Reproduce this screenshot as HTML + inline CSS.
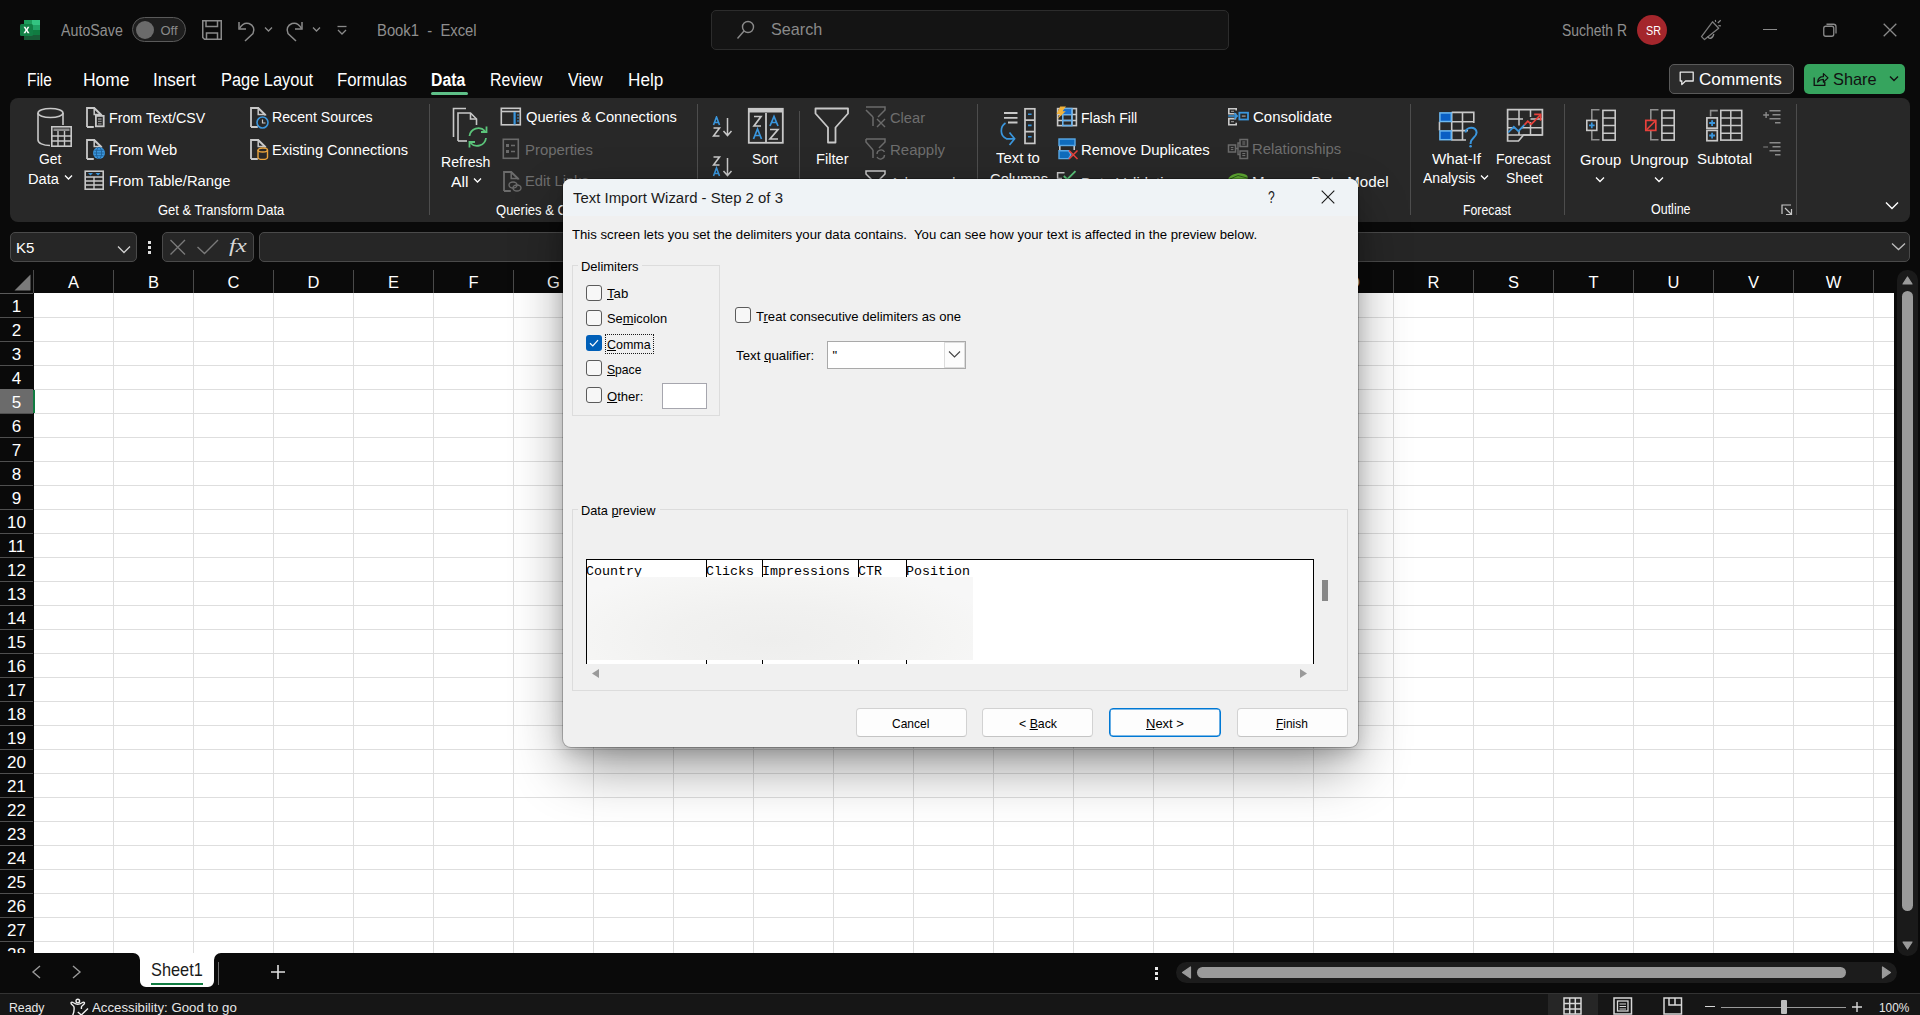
<!DOCTYPE html><html><head><meta charset="utf-8"><title>Excel</title><style>
*{margin:0;padding:0;box-sizing:border-box}
html,body{width:1920px;height:1015px;overflow:hidden;background:#0a0a0a;font-family:'Liberation Sans',sans-serif}
.t{position:absolute;white-space:pre;transform-origin:0 0}
.r{position:absolute}
u{text-decoration:underline;text-underline-offset:1px;text-decoration-thickness:1px}
</style></head><body><svg class="r" style="left:20px;top:20px;" width="20" height="20" viewBox="0 0 20 20" fill="none">
<rect x="4" y="0" width="16" height="20" rx="1.5" fill="#107c41"/>
<rect x="12" y="0" width="8" height="5" fill="#33c481"/>
<rect x="12" y="5" width="8" height="5" fill="#21a366"/>
<rect x="4" y="0" width="8" height="5" fill="#1d9e5c"/>
<rect x="12" y="10" width="8" height="5" fill="#107c41"/>
<rect x="4" y="15" width="16" height="5" fill="#185c37"/>
<rect x="0" y="4" width="13" height="12" rx="1.5" fill="#128046"/>
<path d="M3.6 6.8 L5.4 6.8 L6.5 8.9 L7.6 6.8 L9.4 6.8 L7.5 10 L9.5 13.2 L7.6 13.2 L6.5 11.1 L5.4 13.2 L3.5 13.2 L5.5 10 Z" fill="#fff"/>
</svg>
<div class="t" id="t02523e67" style="left:60.99px;top:23.00px;font-size:16px;line-height:16px;color:#8f8f8f;font-family:'Liberation Sans', sans-serif;transform:scaleX(0.8908);">AutoSave</div>
<div class="r" style="left:132px;top:17px;width:54px;height:25px;border:1.5px solid #5a5a5a;border-radius:13px;background:#1e1e1e;"></div>
<div class="r" style="left:136px;top:20.5px;width:18px;height:18px;border-radius:50%;background:#6b6b6b;"></div>
<div class="t" id="teb0dc6d4" style="left:160.40px;top:24.00px;font-size:13px;line-height:13px;color:#8a8a8a;font-family:'Liberation Sans', sans-serif;">Off</div>
<svg class="r" style="left:202px;top:20px;" width="20" height="20" viewBox="0 0 20 20" fill="none"><path d="M0.75 0.75 H19.25 V19.25 H2.5 L0.75 17.5 Z" stroke="#8a8a8a" stroke-width="1.5"/>
<path d="M4 1 V6.5 H15.5 V1" stroke="#8a8a8a" stroke-width="1.5"/><path d="M4.5 19 V13 H15.5 V19" stroke="#8a8a8a" stroke-width="1.5"/></svg>
<svg class="r" style="left:236px;top:18px;" width="24" height="24" viewBox="0 0 24 24" fill="none"><path d="M3 4 V11 H10" stroke="#8a8a8a" stroke-width="1.5"/><path d="M3.5 10.5 C6 6 9.5 4.5 13 5.5 C17.5 7 19 11.5 17 15.5 L9 23" stroke="#8a8a8a" stroke-width="1.5"/></svg>
<svg class="r" style="left:264px;top:26px;" width="10" height="8" viewBox="0 0 10 8" fill="none"><path d="M1 1.5 L4.5 5 L8 1.5" stroke="#8a8a8a" stroke-width="1.3"/></svg>
<svg class="r" style="left:281px;top:18px;" width="24" height="24" viewBox="0 0 24 24" fill="none"><path d="M21 4 V11 H14" stroke="#8a8a8a" stroke-width="1.5"/><path d="M20.5 10.5 C18 6 14.5 4.5 11 5.5 C6.5 7 5 11.5 7 15.5 L15 23" stroke="#8a8a8a" stroke-width="1.5"/></svg>
<svg class="r" style="left:312px;top:26px;" width="10" height="8" viewBox="0 0 10 8" fill="none"><path d="M1 1.5 L4.5 5 L8 1.5" stroke="#8a8a8a" stroke-width="1.3"/></svg>
<svg class="r" style="left:336px;top:25px;" width="12" height="12" viewBox="0 0 12 12" fill="none"><path d="M1.5 1.5 H10.5" stroke="#8a8a8a" stroke-width="1.3"/><path d="M2 5 L6 9 L10 5" stroke="#8a8a8a" stroke-width="1.3"/></svg>
<div class="t" id="t79c68d6a" style="left:377.07px;top:23.00px;font-size:16px;line-height:16px;color:#8f8f8f;font-family:'Liberation Sans', sans-serif;transform:scaleX(0.9257);">Book1  -  Excel</div>
<div class="r" style="left:711px;top:10px;width:518px;height:40px;border:1px solid #2c2c2c;border-radius:5px;background:#141414;"></div>
<svg class="r" style="left:736px;top:20px;" width="20" height="20" viewBox="0 0 20 20" fill="none"><circle cx="12" cy="7" r="5.5" stroke="#8a8a8a" stroke-width="1.4"/><path d="M8 11 L1.5 18.5" stroke="#8a8a8a" stroke-width="1.4"/></svg>
<div class="t" id="t867af4f4" style="left:771.02px;top:21.00px;font-size:17px;line-height:17px;color:#8a8a8a;font-family:'Liberation Sans', sans-serif;transform:scaleX(0.9518);">Search</div>
<div class="t" id="t7aee8798" style="left:1561.67px;top:23.00px;font-size:16px;line-height:16px;color:#8f8f8f;font-family:'Liberation Sans', sans-serif;transform:scaleX(0.8693);">Sucheth R</div>
<div class="r" style="left:1637px;top:15px;width:30px;height:30px;border-radius:50%;background:#a4262c;"></div>
<div class="t" id="t512c0f5e" style="left:1645.80px;top:24.00px;font-size:13px;line-height:13px;color:#fff;font-family:'Liberation Sans', sans-serif;transform:scaleX(0.8298);">SR</div>
<svg class="r" style="left:1700px;top:19px;" width="23" height="23" viewBox="0 0 23 23" fill="none"><path d="M1.5 17.6 L12.5 2.8 L18.7 9.3 L4.5 20.6 Z" stroke="#7c7c7c" stroke-width="1.3" stroke-linejoin="round"/>
<path d="M7.7 17.4 C8.5 20 12.5 20.5 13.9 15" stroke="#8a8a8a" stroke-width="1.3"/>
<path d="M15.3 1 L15.7 2.8 M17.8 4 L20.7 1.2 M18.4 6.6 L20.9 6.8" stroke="#8a8a8a" stroke-width="1.2"/></svg>
<div class="r" style="left:1763px;top:28.5px;width:14px;height:1.3px;background:#8a8a8a;"></div>
<svg class="r" style="left:1822px;top:22px;" width="16" height="16" viewBox="0 0 16 16" fill="none"><rect x="1.75" y="4.25" width="10" height="10" rx="2" stroke="#8a8a8a" stroke-width="1.3"/><path d="M4.5 2.25 H11.5 A2.5 2.5 0 0 1 14 4.75 V11.5" stroke="#8a8a8a" stroke-width="1.3"/></svg>
<svg class="r" style="left:1883px;top:23px;" width="14" height="14" viewBox="0 0 14 14" fill="none"><path d="M0.7 0.7 L13.3 13.3 M13.3 0.7 L0.7 13.3" stroke="#8a8a8a" stroke-width="1.3"/></svg>
<div class="t" id="tea40fbc1" style="left:26.69px;top:71.00px;font-size:18px;line-height:18px;color:#ffffff;font-family:'Liberation Sans', sans-serif;transform:scaleX(0.8571);">File</div>
<div class="t" id="t49ac8ac8" style="left:83.44px;top:71.00px;font-size:18px;line-height:18px;color:#ffffff;font-family:'Liberation Sans', sans-serif;transform:scaleX(0.9694);">Home</div>
<div class="t" id="t768858fc" style="left:153.05px;top:71.00px;font-size:18px;line-height:18px;color:#ffffff;font-family:'Liberation Sans', sans-serif;transform:scaleX(0.9515);">Insert</div>
<div class="t" id="t654c00e4" style="left:220.65px;top:71.00px;font-size:18px;line-height:18px;color:#ffffff;font-family:'Liberation Sans', sans-serif;transform:scaleX(0.9109);">Page Layout</div>
<div class="t" id="t02751798" style="left:336.85px;top:71.00px;font-size:18px;line-height:18px;color:#ffffff;font-family:'Liberation Sans', sans-serif;transform:scaleX(0.9324);">Formulas</div>
<div class="t" id="te84661d4" style="left:431.45px;top:71.00px;font-size:18px;line-height:18px;color:#ffffff;font-family:'Liberation Sans', sans-serif;font-weight:700;transform:scaleX(0.8761);">Data</div>
<div class="t" id="t1ac13ade" style="left:490.44px;top:71.00px;font-size:18px;line-height:18px;color:#ffffff;font-family:'Liberation Sans', sans-serif;transform:scaleX(0.8857);">Review</div>
<div class="t" id="t1e8d9fc8" style="left:568.48px;top:71.00px;font-size:18px;line-height:18px;color:#ffffff;font-family:'Liberation Sans', sans-serif;transform:scaleX(0.8969);">View</div>
<div class="t" id="tf6ac0ac4" style="left:627.60px;top:71.00px;font-size:18px;line-height:18px;color:#ffffff;font-family:'Liberation Sans', sans-serif;transform:scaleX(0.9521);">Help</div>
<div class="r" style="left:431px;top:92px;width:37px;height:3px;background:#5ec088;border-radius:2px;"></div>
<div class="r" style="left:1669px;top:64px;width:125px;height:30px;border:1px solid #5a5a5a;border-radius:5px;background:#2b2b2b;"></div>
<svg class="r" style="left:1679px;top:71px;" width="16" height="16" viewBox="0 0 16 16" fill="none"><path d="M1.2 1.2 H14.2 V10 H6.5 L2.8 13.6 V10 H1.2 Z" stroke="#e8e8e8" stroke-width="1.3" stroke-linejoin="round"/></svg>
<div class="t" id="tdf8b1b22" style="left:1698.96px;top:71.00px;font-size:17px;line-height:17px;color:#fff;font-family:'Liberation Sans', sans-serif;transform:scaleX(1.0068);">Comments</div>
<div class="r" style="left:1804px;top:64px;width:101px;height:30px;border-radius:5px;background:#36a45e;"></div>
<svg class="r" style="left:1813px;top:71px;" width="17" height="16" viewBox="0 0 17 16" fill="none"><path d="M1.2 6.5 V14.3 H11.8 V11" stroke="#111" stroke-width="1.3"/><path d="M4.6 11 C5 7.5 7.5 5.6 10.4 5.6 V2.6 L15 6.9 L10.4 11.2 V8.4 C8 8.4 6.2 9.2 4.6 11 Z" stroke="#111" stroke-width="1.2" stroke-linejoin="round"/></svg>
<div class="t" id="t3ececf0e" style="left:1833.05px;top:71.00px;font-size:17px;line-height:17px;color:#111;font-family:'Liberation Sans', sans-serif;transform:scaleX(0.9615);">Share</div>
<svg class="r" style="left:1889px;top:75px;" width="11" height="8" viewBox="0 0 11 8" fill="none"><path d="M1 1.5 L5 5.5 L9 1.5" stroke="#111" stroke-width="1.4"/></svg>
<div class="r" style="left:10px;top:98px;width:1900px;height:124px;background:#282828;border-radius:8px;"></div>
<div class="r" style="left:429.0px;top:104px;width:1px;height:111px;background:#4d4d4d;"></div>
<div class="r" style="left:697.0px;top:104px;width:1px;height:111px;background:#4d4d4d;"></div>
<div class="r" style="left:977.0px;top:104px;width:1px;height:111px;background:#4d4d4d;"></div>
<div class="r" style="left:1410.0px;top:104px;width:1px;height:111px;background:#4d4d4d;"></div>
<div class="r" style="left:1564.0px;top:104px;width:1px;height:111px;background:#4d4d4d;"></div>
<div class="r" style="left:1796.0px;top:104px;width:1px;height:111px;background:#4d4d4d;"></div>
<div class="r" style="left:799px;top:111px;width:1px;height:70px;background:#4d4d4d;"></div>
<svg class="r" style="left:36px;top:107px;" width="38" height="40" viewBox="0 0 38 40" fill="none"><path d="M2 6 V33 C2 36 7 38.5 14 38.5" stroke="#c8c8c8" stroke-width="1.6"/>
<ellipse cx="14.5" cy="6" rx="12.5" ry="4.5" stroke="#c8c8c8" stroke-width="1.6"/>
<path d="M27 6 V18" stroke="#c8c8c8" stroke-width="1.6"/>
<rect x="15.8" y="19.8" width="19.4" height="19.4" stroke="#c8c8c8" stroke-width="1.6"/>
<rect x="17.5" y="21.5" width="16" height="2.5" fill="#8a8a8a"/>
<path d="M16 29 H35 M16 34 H35 M22 24 V39 M28.5 24 V39" stroke="#c8c8c8" stroke-width="1.4"/></svg>
<div class="t" id="t63ca1232" style="left:39.17px;top:151.00px;font-size:15.5px;line-height:15.5px;color:#ffffff;font-family:'Liberation Sans', sans-serif;transform:scaleX(0.8943);">Get</div>
<div class="t" id="t2dd26fcd" style="left:27.69px;top:171.00px;font-size:15.5px;line-height:15.5px;color:#ffffff;font-family:'Liberation Sans', sans-serif;transform:scaleX(0.9446);">Data</div>
<svg class="r" style="left:64px;top:174px;" width="9" height="7" viewBox="0 0 9 7" fill="none"><path d="M1 1.5 L4.5 5 L8 1.5" stroke="#ffffff" stroke-width="1.3"/></svg>
<svg class="r" style="left:86px;top:107px;" width="20" height="22" viewBox="0 0 20 22" fill="none"><path d="M1 20 V1 H8.2 L15 7.6 V8.5 M1 20 H7.8" stroke="#c8c8c8" stroke-width="1.8" stroke-linejoin="miter"/><path d="M8.2 1 V7.6 H15 Z" stroke="#c8c8c8" stroke-width="1.5" stroke-linejoin="miter"/></svg>
<svg class="r" style="left:95px;top:115px;" width="10" height="13" viewBox="0 0 10 13" fill="none"><rect x="0.9" y="0.9" width="7.8" height="10.4" fill="#282828" stroke="#c8c8c8" stroke-width="1.8"/><path d="M3 4 H6.6 M3 6.4 H6.6 M3 8.9 H6.6" stroke="#8a8a8a" stroke-width="1.3"/></svg>
<div class="t" id="tb7dfaa74" style="left:108.70px;top:110.00px;font-size:15.5px;line-height:15.5px;color:#ffffff;font-family:'Liberation Sans', sans-serif;transform:scaleX(0.9177);">From Text/CSV</div>
<svg class="r" style="left:86px;top:139px;" width="20" height="22" viewBox="0 0 20 22" fill="none"><path d="M1 20 V1 H8.2 L15 7.6 V8.5 M1 20 H7.8" stroke="#c8c8c8" stroke-width="1.8" stroke-linejoin="miter"/><path d="M8.2 1 V7.6 H15 Z" stroke="#c8c8c8" stroke-width="1.5" stroke-linejoin="miter"/></svg>
<svg class="r" style="left:92px;top:146px;" width="14" height="14" viewBox="0 0 14 14" fill="none"><circle cx="7" cy="7" r="6" fill="#3a96dd"/><path d="M1.5 7 H12.5 M2.5 4.3 H11.5 M2.5 9.7 H11.5" stroke="#1c5a90" stroke-width="0.8"/><ellipse cx="7" cy="7" rx="2.6" ry="5.6" stroke="#1c5a90" stroke-width="0.8"/></svg>
<div class="t" id="t583bd751" style="left:108.68px;top:142.00px;font-size:15.5px;line-height:15.5px;color:#ffffff;font-family:'Liberation Sans', sans-serif;transform:scaleX(0.9476);">From Web</div>
<svg class="r" style="left:84px;top:170px;" width="21" height="21" viewBox="0 0 21 21" fill="none"><rect x="1.2" y="1.2" width="18" height="18" stroke="#c8c8c8" stroke-width="1.6"/>
<path d="M1 7 H19 M1 11 H19 M1 15 H19 M10 7 V19" stroke="#c8c8c8" stroke-width="1.4"/><path d="M4 3 L6.5 5.5 L9 3 Z M11.5 3 L14 5.5 L16.5 3 Z" fill="#3a96dd"/></svg>
<div class="t" id="tfb5d76c1" style="left:108.68px;top:173.00px;font-size:15.5px;line-height:15.5px;color:#ffffff;font-family:'Liberation Sans', sans-serif;transform:scaleX(0.9556);">From Table/Range</div>
<svg class="r" style="left:250px;top:107px;" width="20" height="22" viewBox="0 0 20 22" fill="none"><path d="M1 20 V1 H8.2 L15 7.6 V8.5 M1 20 H7.8" stroke="#c8c8c8" stroke-width="1.8" stroke-linejoin="miter"/><path d="M8.2 1 V7.6 H15 Z" stroke="#c8c8c8" stroke-width="1.5" stroke-linejoin="miter"/></svg>
<svg class="r" style="left:256px;top:116px;" width="13" height="13" viewBox="0 0 13 13" fill="none"><circle cx="6.5" cy="6.5" r="5.5" stroke="#3a96dd" stroke-width="1.6"/><path d="M6.5 3.5 V7 H9.5" stroke="#c8c8c8" stroke-width="1.2"/></svg>
<div class="t" id="t68fbbb08" style="left:272.36px;top:109.00px;font-size:15.5px;line-height:15.5px;color:#ffffff;font-family:'Liberation Sans', sans-serif;transform:scaleX(0.9128);">Recent Sources</div>
<svg class="r" style="left:250px;top:139px;" width="20" height="22" viewBox="0 0 20 22" fill="none"><path d="M1 20 V1 H8.2 L15 7.6 V8.5 M1 20 H7.8" stroke="#c8c8c8" stroke-width="1.8" stroke-linejoin="miter"/><path d="M8.2 1 V7.6 H15 Z" stroke="#c8c8c8" stroke-width="1.5" stroke-linejoin="miter"/></svg>
<svg class="r" style="left:257px;top:147px;" width="12" height="13" viewBox="0 0 12 13" fill="none"><path d="M1 3 V10.5 C1 12 3 12.5 5.5 12.5 C8 12.5 10.5 12 10.5 10.5 V3" stroke="#e8a33d" stroke-width="1.4"/><ellipse cx="5.75" cy="3" rx="4.75" ry="2" stroke="#e8a33d" stroke-width="1.4"/></svg>
<div class="t" id="t87d56f0a" style="left:272.34px;top:142.00px;font-size:15.5px;line-height:15.5px;color:#ffffff;font-family:'Liberation Sans', sans-serif;transform:scaleX(0.9407);">Existing Connections</div>
<div class="t" id="t62a7db54" style="left:158.24px;top:203.00px;font-size:14px;line-height:14px;color:#ffffff;font-family:'Liberation Sans', sans-serif;transform:scaleX(0.9271);">Get &amp; Transform Data</div>
<svg class="r" style="left:452px;top:107px;" width="38" height="42" viewBox="0 0 38 42" fill="none"><path d="M1.5 30 V1.5 H14" stroke="#c8c8c8" stroke-width="1.6"/>
<path d="M6 34 V6 H18.5 L24.5 12 V18" stroke="#c8c8c8" stroke-width="1.6"/><path d="M18.5 6 V12 H24.5" stroke="#c8c8c8" stroke-width="1.6"/>
<path d="M6 34 H15" stroke="#c8c8c8" stroke-width="1.6"/>
<path d="M17.5 29 A9 9 0 0 1 33 24" stroke="#5bc47a" stroke-width="1.8"/><path d="M34.5 19.5 V25 H29" stroke="#5bc47a" stroke-width="1.8"/>
<path d="M34 31 A9 9 0 0 1 18.5 36" stroke="#5bc47a" stroke-width="1.8"/><path d="M17.5 40.5 V35 H23" stroke="#5bc47a" stroke-width="1.8"/></svg>
<div class="t" id="t2f2dee8c" style="left:441.44px;top:154.00px;font-size:15.5px;line-height:15.5px;color:#ffffff;font-family:'Liberation Sans', sans-serif;transform:scaleX(0.9108);">Refresh</div>
<div class="t" id="t6e285e6b" style="left:451.00px;top:174.00px;font-size:15.5px;line-height:15.5px;color:#ffffff;font-family:'Liberation Sans', sans-serif;transform:scaleX(1.0097);">All</div>
<svg class="r" style="left:473px;top:177px;" width="9" height="7" viewBox="0 0 9 7" fill="none"><path d="M1 1.5 L4.5 5 L8 1.5" stroke="#ffffff" stroke-width="1.3"/></svg>
<svg class="r" style="left:500px;top:107px;" width="22" height="20" viewBox="0 0 22 20" fill="none"><rect x="1.3" y="1.3" width="19" height="16.5" stroke="#c8c8c8" stroke-width="1.6"/><path d="M1 4.5 H20" stroke="#c8c8c8" stroke-width="1.6"/><rect x="13.5" y="5" width="2.2" height="12.5" fill="#3a96dd"/><path d="M17 8 H19 M17 11 H19 M17 14 H19" stroke="#3a96dd" stroke-width="1.2"/></svg>
<div class="t" id="t45580bd1" style="left:526.28px;top:109.00px;font-size:15.5px;line-height:15.5px;color:#ffffff;font-family:'Liberation Sans', sans-serif;transform:scaleX(0.9468);">Queries &amp; Connections</div>
<svg class="r" style="left:502px;top:138px;" width="18" height="22" viewBox="0 0 18 22" fill="none"><rect x="1.3" y="1.3" width="15" height="19" stroke="#6b6b6b" stroke-width="1.6"/><rect x="4" y="6" width="3" height="3" fill="#6b6b6b"/><rect x="4" y="12" width="3" height="3" fill="#6b6b6b"/><path d="M9 7.5 H13 M9 13.5 H13" stroke="#6b6b6b" stroke-width="1.4"/></svg>
<div class="t" id="te757a304" style="left:525.32px;top:142.00px;font-size:15.5px;line-height:15.5px;color:#6e6e6e;font-family:'Liberation Sans', sans-serif;transform:scaleX(0.9602);">Properties</div>
<svg class="r" style="left:503px;top:171px;" width="20" height="22" viewBox="0 0 20 22" fill="none"><path d="M1 20 V1 H8.2 L15 7.6 V8.5 M1 20 H7.8" stroke="#6b6b6b" stroke-width="1.8" stroke-linejoin="miter"/><path d="M8.2 1 V7.6 H15 Z" stroke="#6b6b6b" stroke-width="1.5" stroke-linejoin="miter"/></svg>
<svg class="r" style="left:508px;top:180px;" width="14" height="12" viewBox="0 0 14 12" fill="none"><ellipse cx="5" cy="5" rx="4" ry="3" stroke="#6b6b6b" stroke-width="1.4"/><ellipse cx="9" cy="8" rx="4" ry="3" stroke="#6b6b6b" stroke-width="1.4"/></svg>
<div class="t" id="tae38eda8" style="left:525.30px;top:173.00px;font-size:15.5px;line-height:15.5px;color:#6e6e6e;font-family:'Liberation Sans', sans-serif;transform:scaleX(0.9500);">Edit Links</div>
<div class="t" id="t096a97d2" style="left:496.00px;top:203.00px;font-size:14px;line-height:14px;color:#ffffff;font-family:'Liberation Sans', sans-serif;transform:scaleX(0.9300);">Queries &amp; Connections</div>
<svg class="r" style="left:712px;top:116px;" width="22" height="22" viewBox="0 0 22 22" fill="none"><path d="M1.5 9 L4.5 1 L7.5 9 M2.5 6.5 H6.5" stroke="#3a96dd" stroke-width="1.6"/>
<path d="M1.5 12 H7.5 L1.5 20 H7.5" stroke="#c8c8c8" stroke-width="1.6"/><path d="M15.5 2 V19 M11.5 15 L15.5 19.5 L19.5 15" stroke="#c8c8c8" stroke-width="1.5"/></svg>
<svg class="r" style="left:712px;top:156px;" width="22" height="24" viewBox="0 0 22 24" fill="none"><path d="M1.5 1 H7.5 L1.5 9 H7.5" stroke="#c8c8c8" stroke-width="1.6"/>
<path d="M1.5 20 L4.5 12 L7.5 20 M2.5 17.5 H6.5" stroke="#3a96dd" stroke-width="1.6"/><path d="M15.5 2 V19 M11.5 15 L15.5 19.5 L19.5 15" stroke="#c8c8c8" stroke-width="1.5"/></svg>
<svg class="r" style="left:747px;top:107px;" width="38" height="38" viewBox="0 0 38 38" fill="none"><rect x="1.8" y="1.8" width="34" height="34" stroke="#c8c8c8" stroke-width="1.8"/><rect x="2" y="2" width="34" height="3.5" fill="#c8c8c8"/>
<path d="M19 6 V36" stroke="#c8c8c8" stroke-width="1.8"/>
<path d="M7 9.5 H14 L7 19 H14" stroke="#c8c8c8" stroke-width="1.7"/><path d="M6.5 32 L10.5 22 L14.5 32 M7.7 28.5 H13.3" stroke="#3a96dd" stroke-width="1.7"/>
<path d="M23 19 L27 9.5 L31 19 M24.2 15.5 H29.8" stroke="#3a96dd" stroke-width="1.7"/><path d="M23 22.5 H31 L23 32 H31" stroke="#c8c8c8" stroke-width="1.7"/></svg>
<div class="t" id="t333ad965" style="left:752.41px;top:151.00px;font-size:15.5px;line-height:15.5px;color:#ffffff;font-family:'Liberation Sans', sans-serif;transform:scaleX(0.9010);">Sort</div>
<svg class="r" style="left:814px;top:107px;" width="36" height="38" viewBox="0 0 36 38" fill="none"><path d="M1.5 1.5 H34 V6.5 L21.5 20.5 V35.5 H14 V20.5 L1.5 6.5 Z" stroke="#c8c8c8" stroke-width="1.8" stroke-linejoin="round"/></svg>
<div class="t" id="t6118f5eb" style="left:815.58px;top:151.00px;font-size:15.5px;line-height:15.5px;color:#ffffff;font-family:'Liberation Sans', sans-serif;transform:scaleX(0.9452);">Filter</div>
<svg class="r" style="left:865px;top:106px;" width="22" height="22" viewBox="0 0 22 22" fill="none"><path d="M1 1 H20 V4 L13 11 M8 11 L1 4 Z" stroke="#6b6b6b" stroke-width="1.5"/><path d="M8 11 V20" stroke="#6b6b6b" stroke-width="1.5"/><path d="M12 13 L20 21 M20 13 L12 21" stroke="#6b6b6b" stroke-width="1.4"/></svg>
<div class="t" id="t0aa05ab6" style="left:890.05px;top:110.00px;font-size:15.5px;line-height:15.5px;color:#6e6e6e;font-family:'Liberation Sans', sans-serif;transform:scaleX(0.9468);">Clear</div>
<svg class="r" style="left:865px;top:138px;" width="22" height="22" viewBox="0 0 22 22" fill="none"><path d="M1 1 H20 V4 L14 10 M8 12 L1 4 V1" stroke="#6b6b6b" stroke-width="1.5"/><path d="M8 12 V20" stroke="#6b6b6b" stroke-width="1.5"/><path d="M12 16 A4 4 0 0 1 19.5 14 M19.5 17 A4 4 0 0 1 12 19" stroke="#6b6b6b" stroke-width="1.4"/></svg>
<div class="t" id="t4475b578" style="left:890.03px;top:142.00px;font-size:15.5px;line-height:15.5px;color:#6e6e6e;font-family:'Liberation Sans', sans-serif;transform:scaleX(0.9668);">Reapply</div>
<svg class="r" style="left:865px;top:170px;" width="22" height="22" viewBox="0 0 22 22" fill="none"><path d="M1 1 H20 V4 L13 11 V20 H8 V11 L1 4 Z" stroke="#c8c8c8" stroke-width="1.5"/></svg>
<div class="t" id="t5285b9b4" style="left:890.00px;top:175.00px;font-size:15.5px;line-height:15.5px;color:#dcdcdc;font-family:'Liberation Sans', sans-serif;transform:scaleX(0.9500);">Advanced</div>
<svg class="r" style="left:998px;top:107px;" width="40" height="40" viewBox="0 0 40 40" fill="none"><path d="M6 6 H19.5 M6 10.8 H19.5 M10 15.5 H19.5" stroke="#c8c8c8" stroke-width="1.8"/>
<rect x="27" y="1.8" width="9.8" height="34.6" stroke="#c8c8c8" stroke-width="1.7"/><path d="M27 13.2 H36.8 M27 24.6 H36.8" stroke="#c8c8c8" stroke-width="1.7"/>
<path d="M30 7.2 H33.6 M30 18.4 H33.6 M30 29.8 H33.6" stroke="#3a96dd" stroke-width="1.6"/>
<path d="M7.5 16 C2 19.5 1.5 28.5 8.5 31.8 H16" stroke="#3a96dd" stroke-width="1.7"/><path d="M11.5 25.5 L16.6 31.8 L11.5 38" stroke="#3a96dd" stroke-width="1.7"/></svg>
<div class="t" id="t37c2261a" style="left:996.46px;top:150.00px;font-size:15.5px;line-height:15.5px;color:#ffffff;font-family:'Liberation Sans', sans-serif;transform:scaleX(0.9608);">Text to</div>
<div class="t" id="tb820d81c" style="left:990.00px;top:171.00px;font-size:15.5px;line-height:15.5px;color:#ffffff;font-family:'Liberation Sans', sans-serif;transform:scaleX(0.9500);">Columns</div>
<svg class="r" style="left:1056px;top:106px;" width="22" height="22" viewBox="0 0 22 22" fill="none"><rect x="1.6" y="2.6" width="18.8" height="17" stroke="#c8c8c8" stroke-width="1.6"/>
<path d="M1 8.6 H20.5 M1 14.5 H20.5 M16 2 V20" stroke="#c8c8c8" stroke-width="1.5"/>
<rect x="6.8" y="2.6" width="9" height="17" stroke="#67b0ea" stroke-width="1.6"/><path d="M6.5 8.6 H16 M6.5 14.5 H16" stroke="#67b0ea" stroke-width="1.5"/>
<rect x="7.5" y="3.2" width="7.6" height="4.8" fill="#1a6fcc"/>
<path d="M10 0.5 H4.2 L0.6 8 H4.2 L1.4 13 L9.8 5.2 H6.4 Z" fill="#f2b23a"/></svg>
<div class="t" id="t24fde5d8" style="left:1081.45px;top:110.00px;font-size:15.5px;line-height:15.5px;color:#ffffff;font-family:'Liberation Sans', sans-serif;transform:scaleX(0.9067);">Flash Fill</div>
<svg class="r" style="left:1058px;top:138px;" width="22" height="22" viewBox="0 0 22 22" fill="none"><path d="M1.8 7 V13 M16.2 7 V12" stroke="#c8c8c8" stroke-width="1.6"/>
<rect x="1" y="1" width="16" height="6.5" fill="#0f6cbd" stroke="#5aa9e6" stroke-width="1.4"/>
<path d="M1 12.8 H10.5 L13 16.8 L10.5 20.6 H1 Z" fill="#0f6cbd" stroke="#5aa9e6" stroke-width="1.4"/>
<path d="M11 12.5 L19.5 21 M19.5 12.5 L11 21" stroke="#e8413b" stroke-width="1.5"/></svg>
<div class="t" id="t58ad23b4" style="left:1081.38px;top:142.00px;font-size:15.5px;line-height:15.5px;color:#ffffff;font-family:'Liberation Sans', sans-serif;transform:scaleX(0.9578);">Remove Duplicates</div>
<svg class="r" style="left:1056px;top:170px;" width="22" height="22" viewBox="0 0 22 22" fill="none"><path d="M8.5 2.8 H1.6 V20 H9 M1.6 8.5 H6" stroke="#c8c8c8" stroke-width="1.5"/><path d="M7.8 6 L11.2 9.4 L19.5 1.2" stroke="#5bc47a" stroke-width="1.8"/></svg>
<div class="t" id="t4b7b61be" style="left:1081.40px;top:175.00px;font-size:15.5px;line-height:15.5px;color:#ffffff;font-family:'Liberation Sans', sans-serif;transform:scaleX(0.9500);">Data Validation</div>
<svg class="r" style="left:1227px;top:107px;" width="23" height="19" viewBox="0 0 23 19" fill="none"><path d="M9.2 3.6 V1.8 H1.8 V6.8 H9.2 M9.2 11.6 H1.8 V17.8 H9.2 V15.8" stroke="#c8c8c8" stroke-width="1.6"/>
<path d="M4 4.4 H7 M4 14.6 H7" stroke="#8a8a8a" stroke-width="1.2"/>
<path d="M1.2 9 H10.2 M7.3 6.2 L10.2 9 L7.3 11.8" stroke="#3a96dd" stroke-width="1.6"/>
<rect x="12.4" y="5.7" width="8.6" height="6.8" stroke="#3a96dd" stroke-width="1.8"/><path d="M14.8 9.1 H18.6" stroke="#9a9a9a" stroke-width="1.3"/></svg>
<div class="t" id="t87bed671" style="left:1253.00px;top:109.00px;font-size:15.5px;line-height:15.5px;color:#ffffff;font-family:'Liberation Sans', sans-serif;transform:scaleX(0.9655);">Consolidate</div>
<svg class="r" style="left:1227px;top:138px;" width="22" height="22" viewBox="0 0 22 22" fill="none"><rect x="1.5" y="7" width="7" height="7" stroke="#6b6b6b" stroke-width="1.5"/><rect x="13" y="1.5" width="7.5" height="7" stroke="#6b6b6b" stroke-width="1.5"/><rect x="13" y="13" width="7.5" height="7.5" stroke="#6b6b6b" stroke-width="1.5"/>
<path d="M8.5 10.5 H11 V5 H13 M11 10.5 V16.5 H13" stroke="#6b6b6b" stroke-width="1.4"/><path d="M3.8 9.6 H6.4 M3.8 11.6 H6.4 M15.3 4 H18.3 M15.3 6 H18.3 M15.3 15.6 H18.3 M15.3 17.6 H18.3" stroke="#7a7a7a" stroke-width="1"/></svg>
<div class="t" id="t8a87cf0b" style="left:1252.04px;top:141.00px;font-size:15.5px;line-height:15.5px;color:#6e6e6e;font-family:'Liberation Sans', sans-serif;transform:scaleX(0.9591);">Relationships</div>
<svg class="r" style="left:1227px;top:170px;" width="22" height="21" viewBox="0 0 22 21" fill="none"><path d="M1 10 C2 3 16 1 20.5 6 V18 H1 Z" fill="#5ea832"/><path d="M3 9 L11 5.5 L20 8" stroke="#2d5a1a" stroke-width="1"/></svg>
<div class="t" id="t104b34cd" style="left:1252.20px;top:174.00px;font-size:15.5px;line-height:15.5px;color:#ffffff;font-family:'Liberation Sans', sans-serif;transform:scaleX(0.9780);">Manage Data Model</div>
<svg class="r" style="left:1438px;top:111px;" width="42" height="37" viewBox="0 0 42 37" fill="none"><path d="M13.7 1.4 H35.8 V12 M13.7 10.7 H35.8 M13.7 19.6 H30 M13.7 29 H28 M1.5 10.7 V19.6 M13.7 1 V29.5 M24.5 1 V29.5" stroke="#c8c8c8" stroke-width="1.6"/>
<rect x="1.9" y="1.9" width="11.4" height="8.6" fill="#0a5fc4" stroke="#6cb8f0" stroke-width="1.5"/>
<rect x="1.9" y="19.9" width="11.4" height="8.8" fill="#0a5fc4" stroke="#6cb8f0" stroke-width="1.5"/>
<path d="M27.6 21.5 C27.6 15.5 38.6 15 38.6 21.5 C38.6 26.5 32.6 27 32.6 32 V33" stroke="#3a96dd" stroke-width="2"/><circle cx="32.6" cy="35.3" r="1.3" fill="#3a96dd"/></svg>
<div class="t" id="t5670eb40" style="left:1432.00px;top:151.00px;font-size:15.5px;line-height:15.5px;color:#ffffff;font-family:'Liberation Sans', sans-serif;transform:scaleX(0.9812);">What-If</div>
<div class="t" id="t463b8265" style="left:1423.26px;top:170.00px;font-size:15.5px;line-height:15.5px;color:#ffffff;font-family:'Liberation Sans', sans-serif;transform:scaleX(0.9065);">Analysis</div>
<svg class="r" style="left:1480px;top:174px;" width="9" height="7" viewBox="0 0 9 7" fill="none"><path d="M1 1.5 L4.5 5 L8 1.5" stroke="#ffffff" stroke-width="1.3"/></svg>
<svg class="r" style="left:1506px;top:108px;" width="38" height="35" viewBox="0 0 38 35" fill="none"><path d="M1.6 27 V1.6 H36.4 V27 H17.5 L12.5 33 H1.6 V27" stroke="#c8c8c8" stroke-width="1.7"/>
<path d="M1.5 11 H17 M1.5 19.8 H9 M16 19.8 H36.5 M24.5 11 H36.5 M13 1.5 V17.5 M13 22 V27 M24.5 1.5 V9 M24.5 14 V27 M1.5 27 H36.5" stroke="#c8c8c8" stroke-width="1.5"/>
<path d="M2.2 24.5 L7.8 18.8 L12.4 23.2 L18.4 16.8" stroke="#3a96dd" stroke-width="1.7"/><path d="M18.4 16.8 L21.8 13.2 L25.2 16.4 L34.2 7.2" stroke="#e8413b" stroke-width="1.7"/><path d="M28.2 6.4 H34.6 V12.8" stroke="#e8413b" stroke-width="1.7"/></svg>
<div class="t" id="tdfd1562a" style="left:1496.36px;top:151.00px;font-size:15.5px;line-height:15.5px;color:#ffffff;font-family:'Liberation Sans', sans-serif;transform:scaleX(0.9046);">Forecast</div>
<div class="t" id="t3ae132d4" style="left:1506.00px;top:170.00px;font-size:15.5px;line-height:15.5px;color:#ffffff;font-family:'Liberation Sans', sans-serif;transform:scaleX(0.9054);">Sheet</div>
<div class="t" id="te2d467fb" style="left:1463.06px;top:203.00px;font-size:14px;line-height:14px;color:#ffffff;font-family:'Liberation Sans', sans-serif;transform:scaleX(0.8781);">Forecast</div>
<svg class="r" style="left:1585px;top:108px;" width="34" height="34" viewBox="0 0 34 34" fill="none"><path d="M14.5 1.8 H6.8 V31.8 H14.5" stroke="#8f8f8f" stroke-width="1.6"/>
<rect x="17.9" y="2.4" width="12.3" height="29.7" stroke="#c8c8c8" stroke-width="1.6"/><path d="M17.5 10 H30.5 M17.5 17.4 H30.5 M17.5 25.3 H30.5" stroke="#c8c8c8" stroke-width="1.5"/></svg>
<svg class="r" style="left:1585px;top:118px;" width="14" height="14" viewBox="0 0 14 14" fill="none"><rect x="1.8" y="2.4" width="10" height="10" fill="#282828" stroke="#c8c8c8" stroke-width="1.6"/><path d="M6.8 4.6 V10.2 M4 7.4 H9.6" stroke="#3a96dd" stroke-width="1.7"/></svg>
<div class="t" id="t9d1e1c48" style="left:1580.00px;top:152.00px;font-size:15.5px;line-height:15.5px;color:#ffffff;font-family:'Liberation Sans', sans-serif;transform:scaleX(0.9560);">Group</div>
<svg class="r" style="left:1595px;top:176px;" width="10" height="7" viewBox="0 0 10 7" fill="none"><path d="M1 1.5 L5 5.5 L9 1.5" stroke="#ffffff" stroke-width="1.3"/></svg>
<svg class="r" style="left:1644px;top:108px;" width="34" height="34" viewBox="0 0 34 34" fill="none"><path d="M14.5 1.8 H6.8 V31.8 H14.5" stroke="#8f8f8f" stroke-width="1.6"/>
<rect x="17.9" y="2.4" width="12.3" height="29.7" stroke="#c8c8c8" stroke-width="1.6"/><path d="M17.5 10 H30.5 M17.5 17.4 H30.5 M17.5 25.3 H30.5" stroke="#c8c8c8" stroke-width="1.5"/></svg>
<svg class="r" style="left:1644px;top:118px;" width="14" height="14" viewBox="0 0 14 14" fill="none"><rect x="1.8" y="2.4" width="10" height="10" fill="#282828" stroke="#e8413b" stroke-width="1.7"/><path d="M2.5 11.7 L11 3.2" stroke="#e8413b" stroke-width="1.6"/></svg>
<div class="t" id="tc7f7ceb8" style="left:1630.23px;top:152.00px;font-size:15.5px;line-height:15.5px;color:#ffffff;font-family:'Liberation Sans', sans-serif;transform:scaleX(0.9855);">Ungroup</div>
<svg class="r" style="left:1654px;top:176px;" width="10" height="7" viewBox="0 0 10 7" fill="none"><path d="M1 1.5 L5 5.5 L9 1.5" stroke="#ffffff" stroke-width="1.3"/></svg>
<svg class="r" style="left:1705px;top:108px;" width="38" height="34" viewBox="0 0 38 34" fill="none"><path d="M5.6 8.5 V2.6 H12.8" stroke="#8f8f8f" stroke-width="1.6"/>
<rect x="15.8" y="2.4" width="20.9" height="29.7" stroke="#c8c8c8" stroke-width="1.6"/><path d="M15.5 10 H37 M15.5 17.4 H37 M15.5 25.3 H37 M25.8 2 V32.5" stroke="#c8c8c8" stroke-width="1.5"/>
<rect x="1.9" y="9.9" width="10.4" height="10.3" stroke="#c8c8c8" stroke-width="1.7"/><rect x="1.9" y="22.4" width="10.4" height="10.3" stroke="#c8c8c8" stroke-width="1.7"/>
<path d="M7.1 12.2 V17.9 M4.2 15 H10 M7.1 24.7 V30.4 M4.2 27.5 H10" stroke="#3a96dd" stroke-width="1.8"/></svg>
<div class="t" id="tecf0343a" style="left:1696.64px;top:151.00px;font-size:15.5px;line-height:15.5px;color:#ffffff;font-family:'Liberation Sans', sans-serif;transform:scaleX(0.9669);">Subtotal</div>
<svg class="r" style="left:1762px;top:109px;" width="20" height="16" viewBox="0 0 20 16" fill="none"><path d="M1.2 6 H7 M4.1 3 V9" stroke="#8a8a8a" stroke-width="1.4"/><path d="M7.5 1.8 H18.5 M10.5 5.8 H18.5 M7.5 9.8 H18.5 M13 13.8 H18.5" stroke="#8a8a8a" stroke-width="1.4"/></svg>
<svg class="r" style="left:1762px;top:141px;" width="20" height="16" viewBox="0 0 20 16" fill="none"><path d="M1.2 6 H6" stroke="#6a6a6a" stroke-width="1.4"/><path d="M7.5 1.8 H18.5 M10.5 5.8 H18.5 M7.5 9.8 H18.5 M13 13.8 H18.5" stroke="#8a8a8a" stroke-width="1.4"/></svg>
<div class="t" id="t0a29e641" style="left:1650.55px;top:202.00px;font-size:14px;line-height:14px;color:#ffffff;font-family:'Liberation Sans', sans-serif;transform:scaleX(0.8910);">Outline</div>
<svg class="r" style="left:1781px;top:204px;" width="12" height="12" viewBox="0 0 12 12" fill="none"><path d="M1 10 V1 H10" stroke="#c8c8c8" stroke-width="1.2"/><path d="M4 4 L10.5 10.5 M5 10.5 H10.5 V5" stroke="#c8c8c8" stroke-width="1.2"/></svg>
<svg class="r" style="left:1885px;top:201px;" width="14" height="9" viewBox="0 0 14 9" fill="none"><path d="M1 1.5 L7 7.5 L13 1.5" stroke="#ffffff" stroke-width="1.4"/></svg>
<div class="r" style="left:10px;top:232px;width:127px;height:30px;border:1px solid #4a4a4a;border-radius:5px;background:#262626;"></div>
<div class="t" id="t1856bd55" style="left:16.49px;top:240.00px;font-size:15.5px;line-height:15.5px;color:#ffffff;font-family:'Liberation Sans', sans-serif;transform:scaleX(0.9683);">K5</div>
<svg class="r" style="left:117px;top:245px;" width="14" height="9" viewBox="0 0 14 9" fill="none"><path d="M1 1.5 L7 7.5 L13 1.5" stroke="#d0d0d0" stroke-width="1.3"/></svg>
<div class="r" style="left:148px;top:241px;width:3px;height:3px;background:#e0e0e0;"></div>
<div class="r" style="left:148px;top:246px;width:3px;height:3px;background:#e0e0e0;"></div>
<div class="r" style="left:148px;top:251px;width:3px;height:3px;background:#e0e0e0;"></div>
<div class="r" style="left:162px;top:232px;width:92px;height:30px;border:1px solid #4a4a4a;border-radius:5px;background:#262626;"></div>
<svg class="r" style="left:169px;top:239px;" width="18" height="17" viewBox="0 0 18 17" fill="none"><path d="M1.5 1 L16 15.5 M16 1 L1.5 15.5" stroke="#7a7a7a" stroke-width="1.4"/></svg>
<svg class="r" style="left:196px;top:239px;" width="24" height="16" viewBox="0 0 24 16" fill="none"><path d="M1.5 8 L8.5 14.5 L22 1" stroke="#7a7a7a" stroke-width="1.4"/></svg>
<div class="t" id="td6154247" style="left:229.00px;top:236.00px;font-size:19px;line-height:19px;color:#d8d8d8;font-family:'Liberation Sans', sans-serif;transform:scaleX(1.3015);font-family:'Liberation Serif',serif;font-style:italic;">fx</div>
<div class="r" style="left:259px;top:232px;width:1651px;height:30px;border:1px solid #4a4a4a;border-radius:5px;background:#262626;"></div>
<svg class="r" style="left:1891px;top:242px;" width="15" height="9" viewBox="0 0 15 9" fill="none"><path d="M1 1.5 L7.5 7.5 L14 1.5" stroke="#bdbdbd" stroke-width="1.3"/></svg>
<div class="r" style="left:0px;top:270px;width:1894px;height:23px;background:#0a0a0a;"></div>
<svg class="r" style="left:14px;top:274px;" width="17" height="17" viewBox="0 0 17 17" fill="none"><path d="M16.5 0.5 V16.5 H0.5 Z" fill="#7a7a7a"/></svg>
<div class="r" style="left:34px;top:293px;width:1860px;height:660px;background:#ffffff;"></div>
<div class="r" style="left:113px;top:293px;width:1px;height:660px;background:#dedede;"></div>
<div class="r" style="left:113px;top:270px;width:1px;height:23px;background:#4a4a4a;"></div>
<div class="r" style="left:193px;top:293px;width:1px;height:660px;background:#dedede;"></div>
<div class="r" style="left:193px;top:270px;width:1px;height:23px;background:#4a4a4a;"></div>
<div class="r" style="left:273px;top:293px;width:1px;height:660px;background:#dedede;"></div>
<div class="r" style="left:273px;top:270px;width:1px;height:23px;background:#4a4a4a;"></div>
<div class="r" style="left:353px;top:293px;width:1px;height:660px;background:#dedede;"></div>
<div class="r" style="left:353px;top:270px;width:1px;height:23px;background:#4a4a4a;"></div>
<div class="r" style="left:433px;top:293px;width:1px;height:660px;background:#dedede;"></div>
<div class="r" style="left:433px;top:270px;width:1px;height:23px;background:#4a4a4a;"></div>
<div class="r" style="left:513px;top:293px;width:1px;height:660px;background:#dedede;"></div>
<div class="r" style="left:513px;top:270px;width:1px;height:23px;background:#4a4a4a;"></div>
<div class="r" style="left:593px;top:293px;width:1px;height:660px;background:#dedede;"></div>
<div class="r" style="left:593px;top:270px;width:1px;height:23px;background:#4a4a4a;"></div>
<div class="r" style="left:673px;top:293px;width:1px;height:660px;background:#dedede;"></div>
<div class="r" style="left:673px;top:270px;width:1px;height:23px;background:#4a4a4a;"></div>
<div class="r" style="left:753px;top:293px;width:1px;height:660px;background:#dedede;"></div>
<div class="r" style="left:753px;top:270px;width:1px;height:23px;background:#4a4a4a;"></div>
<div class="r" style="left:833px;top:293px;width:1px;height:660px;background:#dedede;"></div>
<div class="r" style="left:833px;top:270px;width:1px;height:23px;background:#4a4a4a;"></div>
<div class="r" style="left:913px;top:293px;width:1px;height:660px;background:#dedede;"></div>
<div class="r" style="left:913px;top:270px;width:1px;height:23px;background:#4a4a4a;"></div>
<div class="r" style="left:993px;top:293px;width:1px;height:660px;background:#dedede;"></div>
<div class="r" style="left:993px;top:270px;width:1px;height:23px;background:#4a4a4a;"></div>
<div class="r" style="left:1073px;top:293px;width:1px;height:660px;background:#dedede;"></div>
<div class="r" style="left:1073px;top:270px;width:1px;height:23px;background:#4a4a4a;"></div>
<div class="r" style="left:1153px;top:293px;width:1px;height:660px;background:#dedede;"></div>
<div class="r" style="left:1153px;top:270px;width:1px;height:23px;background:#4a4a4a;"></div>
<div class="r" style="left:1233px;top:293px;width:1px;height:660px;background:#dedede;"></div>
<div class="r" style="left:1233px;top:270px;width:1px;height:23px;background:#4a4a4a;"></div>
<div class="r" style="left:1313px;top:293px;width:1px;height:660px;background:#dedede;"></div>
<div class="r" style="left:1313px;top:270px;width:1px;height:23px;background:#4a4a4a;"></div>
<div class="r" style="left:1393px;top:293px;width:1px;height:660px;background:#dedede;"></div>
<div class="r" style="left:1393px;top:270px;width:1px;height:23px;background:#4a4a4a;"></div>
<div class="r" style="left:1473px;top:293px;width:1px;height:660px;background:#dedede;"></div>
<div class="r" style="left:1473px;top:270px;width:1px;height:23px;background:#4a4a4a;"></div>
<div class="r" style="left:1553px;top:293px;width:1px;height:660px;background:#dedede;"></div>
<div class="r" style="left:1553px;top:270px;width:1px;height:23px;background:#4a4a4a;"></div>
<div class="r" style="left:1633px;top:293px;width:1px;height:660px;background:#dedede;"></div>
<div class="r" style="left:1633px;top:270px;width:1px;height:23px;background:#4a4a4a;"></div>
<div class="r" style="left:1713px;top:293px;width:1px;height:660px;background:#dedede;"></div>
<div class="r" style="left:1713px;top:270px;width:1px;height:23px;background:#4a4a4a;"></div>
<div class="r" style="left:1793px;top:293px;width:1px;height:660px;background:#dedede;"></div>
<div class="r" style="left:1793px;top:270px;width:1px;height:23px;background:#4a4a4a;"></div>
<div class="r" style="left:1873px;top:293px;width:1px;height:660px;background:#dedede;"></div>
<div class="r" style="left:1873px;top:270px;width:1px;height:23px;background:#4a4a4a;"></div>
<div class="r" style="left:33px;top:270px;width:1px;height:23px;background:#4a4a4a;"></div>
<div class="r" style="left:34px;top:317px;width:1860px;height:1px;background:#dedede;"></div>
<div class="r" style="left:0px;top:317px;width:33px;height:1px;background:#5a5a5a;"></div>
<div class="r" style="left:34px;top:341px;width:1860px;height:1px;background:#dedede;"></div>
<div class="r" style="left:0px;top:341px;width:33px;height:1px;background:#5a5a5a;"></div>
<div class="r" style="left:34px;top:365px;width:1860px;height:1px;background:#dedede;"></div>
<div class="r" style="left:0px;top:365px;width:33px;height:1px;background:#5a5a5a;"></div>
<div class="r" style="left:34px;top:389px;width:1860px;height:1px;background:#dedede;"></div>
<div class="r" style="left:0px;top:389px;width:33px;height:1px;background:#5a5a5a;"></div>
<div class="r" style="left:34px;top:413px;width:1860px;height:1px;background:#dedede;"></div>
<div class="r" style="left:0px;top:413px;width:33px;height:1px;background:#5a5a5a;"></div>
<div class="r" style="left:34px;top:437px;width:1860px;height:1px;background:#dedede;"></div>
<div class="r" style="left:0px;top:437px;width:33px;height:1px;background:#5a5a5a;"></div>
<div class="r" style="left:34px;top:461px;width:1860px;height:1px;background:#dedede;"></div>
<div class="r" style="left:0px;top:461px;width:33px;height:1px;background:#5a5a5a;"></div>
<div class="r" style="left:34px;top:485px;width:1860px;height:1px;background:#dedede;"></div>
<div class="r" style="left:0px;top:485px;width:33px;height:1px;background:#5a5a5a;"></div>
<div class="r" style="left:34px;top:509px;width:1860px;height:1px;background:#dedede;"></div>
<div class="r" style="left:0px;top:509px;width:33px;height:1px;background:#5a5a5a;"></div>
<div class="r" style="left:34px;top:533px;width:1860px;height:1px;background:#dedede;"></div>
<div class="r" style="left:0px;top:533px;width:33px;height:1px;background:#5a5a5a;"></div>
<div class="r" style="left:34px;top:557px;width:1860px;height:1px;background:#dedede;"></div>
<div class="r" style="left:0px;top:557px;width:33px;height:1px;background:#5a5a5a;"></div>
<div class="r" style="left:34px;top:581px;width:1860px;height:1px;background:#dedede;"></div>
<div class="r" style="left:0px;top:581px;width:33px;height:1px;background:#5a5a5a;"></div>
<div class="r" style="left:34px;top:605px;width:1860px;height:1px;background:#dedede;"></div>
<div class="r" style="left:0px;top:605px;width:33px;height:1px;background:#5a5a5a;"></div>
<div class="r" style="left:34px;top:629px;width:1860px;height:1px;background:#dedede;"></div>
<div class="r" style="left:0px;top:629px;width:33px;height:1px;background:#5a5a5a;"></div>
<div class="r" style="left:34px;top:653px;width:1860px;height:1px;background:#dedede;"></div>
<div class="r" style="left:0px;top:653px;width:33px;height:1px;background:#5a5a5a;"></div>
<div class="r" style="left:34px;top:677px;width:1860px;height:1px;background:#dedede;"></div>
<div class="r" style="left:0px;top:677px;width:33px;height:1px;background:#5a5a5a;"></div>
<div class="r" style="left:34px;top:701px;width:1860px;height:1px;background:#dedede;"></div>
<div class="r" style="left:0px;top:701px;width:33px;height:1px;background:#5a5a5a;"></div>
<div class="r" style="left:34px;top:725px;width:1860px;height:1px;background:#dedede;"></div>
<div class="r" style="left:0px;top:725px;width:33px;height:1px;background:#5a5a5a;"></div>
<div class="r" style="left:34px;top:749px;width:1860px;height:1px;background:#dedede;"></div>
<div class="r" style="left:0px;top:749px;width:33px;height:1px;background:#5a5a5a;"></div>
<div class="r" style="left:34px;top:773px;width:1860px;height:1px;background:#dedede;"></div>
<div class="r" style="left:0px;top:773px;width:33px;height:1px;background:#5a5a5a;"></div>
<div class="r" style="left:34px;top:797px;width:1860px;height:1px;background:#dedede;"></div>
<div class="r" style="left:0px;top:797px;width:33px;height:1px;background:#5a5a5a;"></div>
<div class="r" style="left:34px;top:821px;width:1860px;height:1px;background:#dedede;"></div>
<div class="r" style="left:0px;top:821px;width:33px;height:1px;background:#5a5a5a;"></div>
<div class="r" style="left:34px;top:845px;width:1860px;height:1px;background:#dedede;"></div>
<div class="r" style="left:0px;top:845px;width:33px;height:1px;background:#5a5a5a;"></div>
<div class="r" style="left:34px;top:869px;width:1860px;height:1px;background:#dedede;"></div>
<div class="r" style="left:0px;top:869px;width:33px;height:1px;background:#5a5a5a;"></div>
<div class="r" style="left:34px;top:893px;width:1860px;height:1px;background:#dedede;"></div>
<div class="r" style="left:0px;top:893px;width:33px;height:1px;background:#5a5a5a;"></div>
<div class="r" style="left:34px;top:917px;width:1860px;height:1px;background:#dedede;"></div>
<div class="r" style="left:0px;top:917px;width:33px;height:1px;background:#5a5a5a;"></div>
<div class="r" style="left:34px;top:941px;width:1860px;height:1px;background:#dedede;"></div>
<div class="r" style="left:0px;top:941px;width:33px;height:1px;background:#5a5a5a;"></div>
<div class="r" style="left:0px;top:293px;width:33px;height:660px;background:#0a0a0a;"></div>
<div class="r" style="left:0px;top:317px;width:33px;height:1px;background:#4f4f4f;"></div>
<div class="r" style="left:0px;top:341px;width:33px;height:1px;background:#4f4f4f;"></div>
<div class="r" style="left:0px;top:365px;width:33px;height:1px;background:#4f4f4f;"></div>
<div class="r" style="left:0px;top:389px;width:33px;height:1px;background:#4f4f4f;"></div>
<div class="r" style="left:0px;top:413px;width:33px;height:1px;background:#4f4f4f;"></div>
<div class="r" style="left:0px;top:437px;width:33px;height:1px;background:#4f4f4f;"></div>
<div class="r" style="left:0px;top:461px;width:33px;height:1px;background:#4f4f4f;"></div>
<div class="r" style="left:0px;top:485px;width:33px;height:1px;background:#4f4f4f;"></div>
<div class="r" style="left:0px;top:509px;width:33px;height:1px;background:#4f4f4f;"></div>
<div class="r" style="left:0px;top:533px;width:33px;height:1px;background:#4f4f4f;"></div>
<div class="r" style="left:0px;top:557px;width:33px;height:1px;background:#4f4f4f;"></div>
<div class="r" style="left:0px;top:581px;width:33px;height:1px;background:#4f4f4f;"></div>
<div class="r" style="left:0px;top:605px;width:33px;height:1px;background:#4f4f4f;"></div>
<div class="r" style="left:0px;top:629px;width:33px;height:1px;background:#4f4f4f;"></div>
<div class="r" style="left:0px;top:653px;width:33px;height:1px;background:#4f4f4f;"></div>
<div class="r" style="left:0px;top:677px;width:33px;height:1px;background:#4f4f4f;"></div>
<div class="r" style="left:0px;top:701px;width:33px;height:1px;background:#4f4f4f;"></div>
<div class="r" style="left:0px;top:725px;width:33px;height:1px;background:#4f4f4f;"></div>
<div class="r" style="left:0px;top:749px;width:33px;height:1px;background:#4f4f4f;"></div>
<div class="r" style="left:0px;top:773px;width:33px;height:1px;background:#4f4f4f;"></div>
<div class="r" style="left:0px;top:797px;width:33px;height:1px;background:#4f4f4f;"></div>
<div class="r" style="left:0px;top:821px;width:33px;height:1px;background:#4f4f4f;"></div>
<div class="r" style="left:0px;top:845px;width:33px;height:1px;background:#4f4f4f;"></div>
<div class="r" style="left:0px;top:869px;width:33px;height:1px;background:#4f4f4f;"></div>
<div class="r" style="left:0px;top:893px;width:33px;height:1px;background:#4f4f4f;"></div>
<div class="r" style="left:0px;top:917px;width:33px;height:1px;background:#4f4f4f;"></div>
<div class="r" style="left:0px;top:941px;width:33px;height:1px;background:#4f4f4f;"></div>
<div class="r" style="left:0px;top:293px;width:33px;height:1px;background:#5a5a5a;"></div>
<div class="r" style="left:0px;top:389px;width:33px;height:24px;background:#6b6b6b;"></div>
<div class="r" style="left:33px;top:390px;width:2px;height:23px;background:#107c41;"></div>
<div class="t" style="left:33.5px;top:274px;width:80px;text-align:center;font-size:16.5px;line-height:16.5px;color:#fff;">A</div>
<div class="t" style="left:113.5px;top:274px;width:80px;text-align:center;font-size:16.5px;line-height:16.5px;color:#fff;">B</div>
<div class="t" style="left:193.5px;top:274px;width:80px;text-align:center;font-size:16.5px;line-height:16.5px;color:#fff;">C</div>
<div class="t" style="left:273.5px;top:274px;width:80px;text-align:center;font-size:16.5px;line-height:16.5px;color:#fff;">D</div>
<div class="t" style="left:353.5px;top:274px;width:80px;text-align:center;font-size:16.5px;line-height:16.5px;color:#fff;">E</div>
<div class="t" style="left:433.5px;top:274px;width:80px;text-align:center;font-size:16.5px;line-height:16.5px;color:#fff;">F</div>
<div class="t" style="left:513.5px;top:274px;width:80px;text-align:center;font-size:16.5px;line-height:16.5px;color:#fff;">G</div>
<div class="t" style="left:593.5px;top:274px;width:80px;text-align:center;font-size:16.5px;line-height:16.5px;color:#fff;">H</div>
<div class="t" style="left:673.5px;top:274px;width:80px;text-align:center;font-size:16.5px;line-height:16.5px;color:#fff;">I</div>
<div class="t" style="left:753.5px;top:274px;width:80px;text-align:center;font-size:16.5px;line-height:16.5px;color:#fff;">J</div>
<div class="t" style="left:833.5px;top:274px;width:80px;text-align:center;font-size:16.5px;line-height:16.5px;color:#fff;">K</div>
<div class="t" style="left:913.5px;top:274px;width:80px;text-align:center;font-size:16.5px;line-height:16.5px;color:#fff;">L</div>
<div class="t" style="left:993.5px;top:274px;width:80px;text-align:center;font-size:16.5px;line-height:16.5px;color:#fff;">M</div>
<div class="t" style="left:1073.5px;top:274px;width:80px;text-align:center;font-size:16.5px;line-height:16.5px;color:#fff;">N</div>
<div class="t" style="left:1153.5px;top:274px;width:80px;text-align:center;font-size:16.5px;line-height:16.5px;color:#fff;">O</div>
<div class="t" style="left:1233.5px;top:274px;width:80px;text-align:center;font-size:16.5px;line-height:16.5px;color:#fff;">P</div>
<div class="t" style="left:1313.5px;top:274px;width:80px;text-align:center;font-size:16.5px;line-height:16.5px;color:#fff;">Q</div>
<div class="t" style="left:1393.5px;top:274px;width:80px;text-align:center;font-size:16.5px;line-height:16.5px;color:#fff;">R</div>
<div class="t" style="left:1473.5px;top:274px;width:80px;text-align:center;font-size:16.5px;line-height:16.5px;color:#fff;">S</div>
<div class="t" style="left:1553.5px;top:274px;width:80px;text-align:center;font-size:16.5px;line-height:16.5px;color:#fff;">T</div>
<div class="t" style="left:1633.5px;top:274px;width:80px;text-align:center;font-size:16.5px;line-height:16.5px;color:#fff;">U</div>
<div class="t" style="left:1713.5px;top:274px;width:80px;text-align:center;font-size:16.5px;line-height:16.5px;color:#fff;">V</div>
<div class="t" style="left:1793.5px;top:274px;width:80px;text-align:center;font-size:16.5px;line-height:16.5px;color:#fff;">W</div>
<div class="t" style="left:0px;top:298px;width:33px;text-align:center;font-size:17px;line-height:17px;color:#fff;">1</div>
<div class="t" style="left:0px;top:322px;width:33px;text-align:center;font-size:17px;line-height:17px;color:#fff;">2</div>
<div class="t" style="left:0px;top:346px;width:33px;text-align:center;font-size:17px;line-height:17px;color:#fff;">3</div>
<div class="t" style="left:0px;top:370px;width:33px;text-align:center;font-size:17px;line-height:17px;color:#fff;">4</div>
<div class="t" style="left:0px;top:394px;width:33px;text-align:center;font-size:17px;line-height:17px;color:#fff;">5</div>
<div class="t" style="left:0px;top:418px;width:33px;text-align:center;font-size:17px;line-height:17px;color:#fff;">6</div>
<div class="t" style="left:0px;top:442px;width:33px;text-align:center;font-size:17px;line-height:17px;color:#fff;">7</div>
<div class="t" style="left:0px;top:466px;width:33px;text-align:center;font-size:17px;line-height:17px;color:#fff;">8</div>
<div class="t" style="left:0px;top:490px;width:33px;text-align:center;font-size:17px;line-height:17px;color:#fff;">9</div>
<div class="t" style="left:0px;top:514px;width:33px;text-align:center;font-size:17px;line-height:17px;color:#fff;">10</div>
<div class="t" style="left:0px;top:538px;width:33px;text-align:center;font-size:17px;line-height:17px;color:#fff;">11</div>
<div class="t" style="left:0px;top:562px;width:33px;text-align:center;font-size:17px;line-height:17px;color:#fff;">12</div>
<div class="t" style="left:0px;top:586px;width:33px;text-align:center;font-size:17px;line-height:17px;color:#fff;">13</div>
<div class="t" style="left:0px;top:610px;width:33px;text-align:center;font-size:17px;line-height:17px;color:#fff;">14</div>
<div class="t" style="left:0px;top:634px;width:33px;text-align:center;font-size:17px;line-height:17px;color:#fff;">15</div>
<div class="t" style="left:0px;top:658px;width:33px;text-align:center;font-size:17px;line-height:17px;color:#fff;">16</div>
<div class="t" style="left:0px;top:682px;width:33px;text-align:center;font-size:17px;line-height:17px;color:#fff;">17</div>
<div class="t" style="left:0px;top:706px;width:33px;text-align:center;font-size:17px;line-height:17px;color:#fff;">18</div>
<div class="t" style="left:0px;top:730px;width:33px;text-align:center;font-size:17px;line-height:17px;color:#fff;">19</div>
<div class="t" style="left:0px;top:754px;width:33px;text-align:center;font-size:17px;line-height:17px;color:#fff;">20</div>
<div class="t" style="left:0px;top:778px;width:33px;text-align:center;font-size:17px;line-height:17px;color:#fff;">21</div>
<div class="t" style="left:0px;top:802px;width:33px;text-align:center;font-size:17px;line-height:17px;color:#fff;">22</div>
<div class="t" style="left:0px;top:826px;width:33px;text-align:center;font-size:17px;line-height:17px;color:#fff;">23</div>
<div class="t" style="left:0px;top:850px;width:33px;text-align:center;font-size:17px;line-height:17px;color:#fff;">24</div>
<div class="t" style="left:0px;top:874px;width:33px;text-align:center;font-size:17px;line-height:17px;color:#fff;">25</div>
<div class="t" style="left:0px;top:898px;width:33px;text-align:center;font-size:17px;line-height:17px;color:#fff;">26</div>
<div class="t" style="left:0px;top:922px;width:33px;text-align:center;font-size:17px;line-height:17px;color:#fff;">27</div>
<div class="t" style="left:0px;top:946px;width:33px;text-align:center;font-size:17px;line-height:17px;color:#fff;">28</div>
<div class="r" style="left:0px;top:953px;width:1920px;height:62px;background:#0a0a0a;"></div>
<div class="r" style="left:1897px;top:270px;width:21px;height:686px;background:#1a1a1a;border-radius:10px;"></div>
<svg class="r" style="left:1902px;top:276px;" width="11" height="9" viewBox="0 0 11 9" fill="none"><path d="M5.5 1 L10 8 H1 Z" fill="#9a9a9a" stroke="#9a9a9a" stroke-linejoin="round" stroke-width="1.2"/></svg>
<div class="r" style="left:1902px;top:291px;width:11px;height:620px;background:#9a9a9a;border-radius:5.5px;"></div>
<svg class="r" style="left:1902px;top:941px;" width="11" height="9" viewBox="0 0 11 9" fill="none"><path d="M5.5 8 L10 1 H1 Z" fill="#9a9a9a" stroke="#9a9a9a" stroke-linejoin="round" stroke-width="1.2"/></svg>
<svg class="r" style="left:133px;top:953px" width="88" height="36" viewBox="0 0 88 36">
<path d="M0 0 H88 A7 7 0 0 0 81 7 V28 A6 6 0 0 1 75 34 H13 A6 6 0 0 1 7 28 V7 A7 7 0 0 0 0 0 Z" fill="#fff"/></svg>
<div class="t" id="t7d54c5df" style="left:151.24px;top:961.00px;font-size:18.5px;line-height:18.5px;color:#1a1a1a;font-family:'Liberation Sans', sans-serif;transform:scaleX(0.8829);">Sheet1</div>
<div class="r" style="left:151px;top:983px;width:52px;height:2px;background:#107c41;"></div>
<div class="r" style="left:218px;top:962px;width:1px;height:23px;background:#6a6a6a;"></div>
<svg class="r" style="left:31px;top:965px;" width="11" height="14" viewBox="0 0 11 14" fill="none"><path d="M9 1 L2 7 L9 13" stroke="#9a9a9a" stroke-width="1.4"/></svg>
<svg class="r" style="left:71px;top:965px;" width="11" height="14" viewBox="0 0 11 14" fill="none"><path d="M2 1 L9 7 L2 13" stroke="#9a9a9a" stroke-width="1.4"/></svg>
<svg class="r" style="left:270px;top:964px;" width="16" height="16" viewBox="0 0 16 16" fill="none"><path d="M8 1 V15 M1 8 H15" stroke="#e0e0e0" stroke-width="1.6"/></svg>
<div class="r" style="left:1154.5px;top:966.5px;width:3.5px;height:3.5px;background:#e8e8e8;"></div>
<div class="r" style="left:1154.5px;top:971.5px;width:3.5px;height:3.5px;background:#e8e8e8;"></div>
<div class="r" style="left:1154.5px;top:976.5px;width:3.5px;height:3.5px;background:#e8e8e8;"></div>
<div class="r" style="left:1176px;top:962px;width:721px;height:21px;background:#1c1c1c;border-radius:10.5px;"></div>
<svg class="r" style="left:1181px;top:966px;" width="11" height="13" viewBox="0 0 11 13" fill="none"><path d="M1.5 6.5 L9.5 1 V12 Z" fill="#9a9a9a" stroke="#9a9a9a" stroke-linejoin="round" stroke-width="1.2"/></svg>
<div class="r" style="left:1197px;top:967px;width:649px;height:11px;background:#9a9a9a;border-radius:5.5px;"></div>
<svg class="r" style="left:1881px;top:966px;" width="11" height="13" viewBox="0 0 11 13" fill="none"><path d="M9.5 6.5 L1.5 1 V12 Z" fill="#9a9a9a" stroke="#9a9a9a" stroke-linejoin="round" stroke-width="1.2"/></svg>
<div class="r" style="left:0px;top:993px;width:1920px;height:22px;background:#161616;border-top:1px solid #333;"></div>
<div class="t" id="t0c435c6a" style="left:9.04px;top:1001.00px;font-size:13.5px;line-height:13.5px;color:#e8e8e8;font-family:'Liberation Sans', sans-serif;transform:scaleX(0.9088);">Ready</div>
<svg class="r" style="left:69px;top:995px;" width="22" height="20" viewBox="0 0 22 20" fill="none"><circle cx="8.8" cy="6.1" r="1.8" stroke="#f0f0f0" stroke-width="1.4"/><path d="M5 12 C5 10.5 2.2 10 2 8.2 C1.9 6.8 3.5 7 4.5 7.8 C7 9.6 10.6 9.6 13 7.8 C14 7 15.6 6.8 15.5 8.2 C15.3 10 12.4 10.5 12.4 12 V14" stroke="#f0f0f0" stroke-width="1.4" stroke-linejoin="round"/><path d="M5 12 C5.4 15 5 17.5 3.6 20.5" stroke="#f0f0f0" stroke-width="1.4"/><path d="M8.8 17 L12.3 20 L19 13.6" stroke="#f0f0f0" stroke-width="1.4"/></svg>
<div class="t" id="tf6bdc644" style="left:92.00px;top:1001.00px;font-size:13.5px;line-height:13.5px;color:#e8e8e8;font-family:'Liberation Sans', sans-serif;transform:scaleX(0.9798);">Accessibility: Good to go</div>
<div class="r" style="left:1548px;top:994px;width:50px;height:21px;background:#262626;"></div>
<svg class="r" style="left:1563px;top:997px;" width="19" height="18" viewBox="0 0 19 18" fill="none"><path d="M1 1 H18 V17 H1 Z M1 6.5 H18 M1 12 H18 M6.7 1 V17 M12.3 1 V17" stroke="#d8d8d8" stroke-width="1.5"/></svg>
<svg class="r" style="left:1613px;top:997px;" width="20" height="18" viewBox="0 0 20 18" fill="none"><rect x="1" y="1" width="17.5" height="16" stroke="#d8d8d8" stroke-width="1.5"/><rect x="4.5" y="4" width="10.5" height="10" stroke="#d8d8d8" stroke-width="1.3"/><path d="M6.5 7 H13 M6.5 9.5 H13 M6.5 12 H13" stroke="#d8d8d8" stroke-width="1.1"/></svg>
<svg class="r" style="left:1663px;top:997px;" width="20" height="18" viewBox="0 0 20 18" fill="none"><path d="M1 1 H18.5 V17 H1 Z" stroke="#d8d8d8" stroke-width="1.5"/><path d="M6 1 V8 H12 V1 M12 8 H18" stroke="#d8d8d8" stroke-width="1.5"/></svg>
<div class="r" style="left:1705px;top:1006px;width:10px;height:1.4px;background:#d8d8d8;"></div>
<div class="r" style="left:1721px;top:1007px;width:125px;height:1px;background:#9a9a9a;"></div>
<div class="r" style="left:1781px;top:1000px;width:6px;height:14px;background:#bdbdbd;border-radius:1px;"></div>
<svg class="r" style="left:1851px;top:1001px;" width="12" height="12" viewBox="0 0 12 12" fill="none"><path d="M6 1 V11 M1 6 H11" stroke="#d8d8d8" stroke-width="1.4"/></svg>
<div class="t" id="t6da7c941" style="left:1879.05px;top:1001.00px;font-size:13.5px;line-height:13.5px;color:#e8e8e8;font-family:'Liberation Sans', sans-serif;transform:scaleX(0.8776);">100%</div>
<div class="r" style="left:563px;top:179px;width:795px;height:568px;border-radius:8px;background:#f0f0f0;box-shadow:0 0 0 1px rgba(0,0,0,0.22),0 24px 56px -6px rgba(0,0,0,0.44),0 6px 16px rgba(0,0,0,0.14);overflow:hidden;"></div>
<div class="r" style="left:563px;top:179px;width:795px;height:37px;border-radius:8px 8px 0 0;background:#eff3f6;"></div>
<div class="t" id="t1e39a849" style="left:572.90px;top:190.00px;font-size:15.5px;line-height:15.5px;color:#1a1a1a;font-family:'Liberation Sans', sans-serif;transform:scaleX(0.9633);">Text Import Wizard - Step 2 of 3</div>
<div class="t" id="t1ad3ddfd" style="left:1268.00px;top:189.00px;font-size:16.5px;line-height:16.5px;color:#1a1a1a;font-family:'Liberation Sans', sans-serif;transform:scaleX(0.7323);">?</div>
<svg class="r" style="left:1321px;top:190px;" width="14" height="14" viewBox="0 0 14 14" fill="none"><path d="M0.7 0.7 L13.3 13.3 M13.3 0.7 L0.7 13.3" stroke="#1a1a1a" stroke-width="1.1"/></svg>
<div class="t" id="t935fff4c" style="left:572.41px;top:228.00px;font-size:13px;line-height:13px;color:#000000;font-family:'Liberation Sans', sans-serif;transform:scaleX(1.0121);">This screen lets you set the delimiters your data contains.  You can see how your text is affected in the preview below.</div>
<div class="r" style="left:572px;top:265px;width:148px;height:151px;border:1px solid #dcdcdc;"></div>
<div class="r" style="left:578px;top:258px;width:64px;height:12px;background:#f0f0f0;"></div>
<div class="t" id="t23661c3f" style="left:581.00px;top:260.00px;font-size:13px;line-height:13px;color:#000000;font-family:'Liberation Sans', sans-serif;transform:scaleX(0.9968);">Delimiters</div>
<div class="r" style="left:586px;top:285px;width:16px;height:16px;border:1px solid #5b5b5b;border-radius:3px;background:#f7f7f7;"></div>
<div class="t" id="ta139ebf9" style="left:606.81px;top:287.00px;font-size:13px;line-height:13px;color:#000000;font-family:'Liberation Sans', sans-serif;transform:scaleX(1.0113);"><u>T</u>ab</div>
<div class="r" style="left:586px;top:310px;width:16px;height:16px;border:1px solid #5b5b5b;border-radius:3px;background:#f7f7f7;"></div>
<div class="t" id="tb35e343f" style="left:606.80px;top:312.00px;font-size:13px;line-height:13px;color:#000000;font-family:'Liberation Sans', sans-serif;transform:scaleX(0.9893);">Se<u>m</u>icolon</div>
<div class="r" style="left:586px;top:335px;width:16px;height:16px;background:#005fb8;border-radius:3px;"></div>
<svg class="r" style="left:586px;top:335px;" width="16" height="16" viewBox="0 0 16 16" fill="none"><path d="M4 8.3 L6.8 11 L12 5.2" stroke="#fff" stroke-width="1.2"/></svg>
<div class="t" id="tc94b7bec" style="left:606.60px;top:338.00px;font-size:13px;line-height:13px;color:#000000;font-family:'Liberation Sans', sans-serif;transform:scaleX(0.9600);"><u>C</u>omma</div>
<div class="r" style="left:605px;top:334px;width:49px;height:20px;border:1px dotted #1a1a1a;"></div>
<div class="r" style="left:586px;top:360px;width:16px;height:16px;border:1px solid #5b5b5b;border-radius:3px;background:#f7f7f7;"></div>
<div class="t" id="t6b2f5134" style="left:606.80px;top:363.00px;font-size:13px;line-height:13px;color:#000000;font-family:'Liberation Sans', sans-serif;transform:scaleX(0.9334);"><u>S</u>pace</div>
<div class="r" style="left:586px;top:387px;width:16px;height:16px;border:1px solid #5b5b5b;border-radius:3px;background:#f7f7f7;"></div>
<div class="t" id="tc96c7f46" style="left:606.79px;top:390.00px;font-size:13px;line-height:13px;color:#000000;font-family:'Liberation Sans', sans-serif;transform:scaleX(1.0062);"><u>O</u>ther:</div>
<div class="r" style="left:662px;top:383px;width:45px;height:26px;border:1px solid #a6a6ae;background:#fff;"></div>
<div class="r" style="left:735px;top:307px;width:16px;height:16px;border:1px solid #5b5b5b;border-radius:3px;background:#f7f7f7;"></div>
<div class="t" id="t374a47aa" style="left:756.00px;top:310.00px;font-size:13px;line-height:13px;color:#000000;font-family:'Liberation Sans', sans-serif;transform:scaleX(1.0047);">T<u>r</u>eat consecutive delimiters as one</div>
<div class="t" id="tfc9d7d8f" style="left:735.80px;top:349.00px;font-size:13px;line-height:13px;color:#000000;font-family:'Liberation Sans', sans-serif;transform:scaleX(1.0198);">Text <u>q</u>ualifier:</div>
<div class="r" style="left:827px;top:341px;width:139px;height:28px;border:1px solid #a9a9a9;background:#fff;"></div>
<div class="r" style="left:944px;top:342px;width:21px;height:26px;border:1px solid #dcdcdc;background:#fcfcfc;"></div>
<svg class="r" style="left:948px;top:350px;" width="13" height="9" viewBox="0 0 13 9" fill="none"><path d="M1 1.5 L6.5 7 L12 1.5" stroke="#444" stroke-width="1.1"/></svg>
<div class="t" id="tc5f5a402" style="left:832.40px;top:349.00px;font-size:13px;line-height:13px;color:#000000;font-family:'Liberation Sans', sans-serif;">"</div>
<div class="r" style="left:572px;top:509px;width:776px;height:182px;border:1px solid #dcdcdc;"></div>
<div class="r" style="left:578px;top:502px;width:82px;height:12px;background:#f0f0f0;"></div>
<div class="t" id="tb61fc484" style="left:581.01px;top:504.00px;font-size:13px;line-height:13px;color:#000000;font-family:'Liberation Sans', sans-serif;transform:scaleX(0.9806);">Data <u>p</u>review</div>
<div class="r" style="left:586px;top:559px;width:728px;height:105px;background:#fff;border-top:1px solid #000;border-left:1px solid #000;border-right:1px solid #000;"></div>
<div class="r" style="left:706px;top:560px;width:1px;height:104px;background:#000;"></div>
<div class="r" style="left:762px;top:560px;width:1px;height:104px;background:#000;"></div>
<div class="r" style="left:858px;top:560px;width:1px;height:104px;background:#000;"></div>
<div class="r" style="left:906px;top:560px;width:1px;height:104px;background:#000;"></div>
<div class="t" id="tc3b42322" style="left:586.00px;top:565.00px;font-size:13.33px;line-height:13.33px;color:#000000;font-family:'Liberation Mono', monospace;">Country</div>
<div class="t" id="t69e7085a" style="left:706.00px;top:565.00px;font-size:13.33px;line-height:13.33px;color:#000000;font-family:'Liberation Mono', monospace;">Clicks</div>
<div class="t" id="t69a07b6c" style="left:762.00px;top:565.00px;font-size:13.33px;line-height:13.33px;color:#000000;font-family:'Liberation Mono', monospace;">Impressions</div>
<div class="t" id="tc1eefd65" style="left:858.00px;top:565.00px;font-size:13.33px;line-height:13.33px;color:#000000;font-family:'Liberation Mono', monospace;">CTR</div>
<div class="t" id="t87067145" style="left:906.00px;top:565.00px;font-size:13.33px;line-height:13.33px;color:#000000;font-family:'Liberation Mono', monospace;">Position</div>
<div class="r" style="left:587px;top:577px;width:386px;height:83px;background:radial-gradient(ellipse 60% 90% at 48% 75%,#eeeeed 0%,#f1f1f0 45%,#f5f5f4 80%,#f7f7f7 100%);"></div>
<div class="r" style="left:1322px;top:580px;width:6px;height:21px;background:#888;"></div>
<svg class="r" style="left:591px;top:668px;" width="9" height="11" viewBox="0 0 9 11" fill="none"><path d="M1 5.5 L8 1 V10 Z" fill="#9a9a9a"/></svg>
<svg class="r" style="left:1299px;top:668px;" width="9" height="11" viewBox="0 0 9 11" fill="none"><path d="M8 5.5 L1 1 V10 Z" fill="#9a9a9a"/></svg>
<div class="r" style="left:855.5px;top:708px;width:111px;height:29px;border:1px solid #d2d2d2;border-bottom-color:#c4c4c4;border-radius:4px;background:#fdfdfd;"></div>
<div class="t" id="tc578a7c2" style="left:892.41px;top:717.00px;font-size:13px;line-height:13px;color:#000000;font-family:'Liberation Sans', sans-serif;transform:scaleX(0.9228);">Cancel</div>
<div class="r" style="left:982px;top:708px;width:111px;height:29px;border:1px solid #d2d2d2;border-bottom-color:#c4c4c4;border-radius:4px;background:#fdfdfd;"></div>
<div class="t" id="tc19809e7" style="left:1019.41px;top:717.00px;font-size:13px;line-height:13px;color:#000000;font-family:'Liberation Sans', sans-serif;transform:scaleX(0.9478);">&lt; <u>B</u>ack</div>
<div class="r" style="left:1109px;top:708px;width:112px;height:29px;border:1px solid #0078d4;box-shadow:inset 0 0 0 0.6px #0078d4;border-radius:4px;background:#fdfdfd;"></div>
<div class="t" id="tb06fb4c1" style="left:1145.79px;top:717.00px;font-size:13px;line-height:13px;color:#000000;font-family:'Liberation Sans', sans-serif;transform:scaleX(0.9984);"><u>N</u>ext &gt;</div>
<div class="r" style="left:1236.5px;top:708px;width:111px;height:29px;border:1px solid #d2d2d2;border-bottom-color:#c4c4c4;border-radius:4px;background:#fdfdfd;"></div>
<div class="t" id="t64188a02" style="left:1276.00px;top:717.00px;font-size:13px;line-height:13px;color:#000000;font-family:'Liberation Sans', sans-serif;transform:scaleX(0.9184);"><u>F</u>inish</div></body></html>
